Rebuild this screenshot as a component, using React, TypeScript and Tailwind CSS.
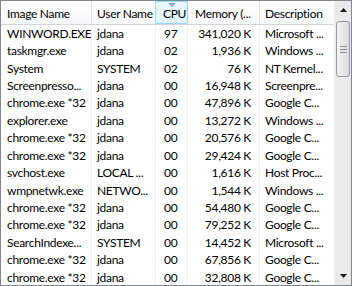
import React from "react";

type Row = [string, string, string, string, string];

const rows: Row[] = [
  ["WINWORD.EXE", "jdana", "97", "341,020 K", "Microsoft ..."],
  ["taskmgr.exe", "jdana", "02", "1,936 K", "Windows ..."],
  ["System", "SYSTEM", "02", "76 K", "NT Kernel..."],
  ["Screenpresso...", "jdana", "00", "16,948 K", "Screenpre..."],
  ["chrome.exe *32", "jdana", "00", "47,896 K", "Google C..."],
  ["explorer.exe", "jdana", "00", "13,272 K", "Windows ..."],
  ["chrome.exe *32", "jdana", "00", "20,576 K", "Google C..."],
  ["chrome.exe *32", "jdana", "00", "29,424 K", "Google C..."],
  ["svchost.exe", "LOCAL ...", "00", "1,616 K", "Host Proc..."],
  ["wmpnetwk.exe", "NETWO...", "00", "1,544 K", "Windows ..."],
  ["chrome.exe *32", "jdana", "00", "54,480 K", "Google C..."],
  ["chrome.exe *32", "jdana", "00", "79,252 K", "Google C..."],
  ["SearchIndexe...", "SYSTEM", "00", "14,452 K", "Microsoft ..."],
  ["chrome.exe *32", "jdana", "00", "67,856 K", "Google C..."],
  ["chrome.exe *32", "jdana", "00", "32,808 K", "Google C..."],
];

const cols = "grid grid-cols-[91px_64px_32px_72px_75px]";

function Header() {
  const cell =
    "h-full flex items-center pt-[2px] border-r border-[#e3e5e8] whitespace-nowrap overflow-hidden";
  return (
    <div className={`${cols} h-[24px] bg-gradient-to-b from-white to-[#f7f8fa] border-b border-[#d5d5d5]`}>
      <div className={`${cell} pl-[6px]`}>Image Name</div>
      <div className={`${cell} pl-[5px]`}>User Name</div>
      <div className="relative h-full flex items-center pt-[2px] pl-[7px] bg-gradient-to-b from-[#ebf8fe] to-[#e0f3fd] border border-[#96d9f9] -ml-px whitespace-nowrap overflow-hidden">
        <svg className="absolute top-[1px] left-[12px]" width="8" height="5" viewBox="0 0 8 5">
          <path d="M0 0 H8 L4 4 Z" fill="#8fa7c9" />
        </svg>
        CPU
      </div>
      <div className={`${cell} pl-[7px]`}>Memory (...</div>
      <div className={`${cell} pl-[5px] border-r-0`}>Description</div>
    </div>
  );
}

function Scrollbar() {
  return (
    <div className="w-[17px] h-full flex flex-col bg-[#eaeaea] border-l border-[#f2f2f2]">
      <div className="h-[18px] flex items-center justify-center shrink-0">
        <svg width="7" height="4" viewBox="0 0 7 4">
          <path d="M3.5 0 L7 4 H0 Z" fill="#1a1a1a" />
        </svg>
      </div>
      <div className="mt-[2px] mx-[1px] h-[56px] shrink-0 rounded-[3px] border border-[#979aa0] bg-gradient-to-r from-[#f4f4f4] to-[#dcdcdc] flex flex-col items-center justify-center gap-[2px]">
        <div className="w-[7px] h-px bg-[#8b8e93]" />
        <div className="w-[7px] h-px bg-[#8b8e93]" />
        <div className="w-[7px] h-px bg-[#8b8e93]" />
      </div>
      <div className="flex-1" />
      <div className="h-[18px] flex items-center justify-center shrink-0">
        <svg width="7" height="4" viewBox="0 0 7 4">
          <path d="M0 0 H7 L3.5 4 Z" fill="#1a1a1a" />
        </svg>
      </div>
    </div>
  );
}

export default function App() {
  const cell = "h-full flex items-center border-r border-[#f0f0f0] whitespace-nowrap overflow-hidden";
  return (
    <div
      className="w-[352px] h-[286px] bg-white border border-[#828790] flex overflow-hidden text-[12px] tracking-[-0.3px] text-black"
      style={{ fontFamily: 'Lato, "Liberation Sans", sans-serif' }}
    >
      <div className="w-[334px] h-full flex flex-col overflow-hidden">
        <Header />
        <div className="flex-1 overflow-hidden">
          {rows.map((r, i) => (
            <div key={i} className={`${cols} h-[17.43px]`}>
              <div className={`${cell} pl-[6px]`}>{r[0]}</div>
              <div className={`${cell} pl-[5px]`}>{r[1]}</div>
              <div className={`${cell} pl-[8px]`}>{r[2]}</div>
              <div className={`${cell} justify-end pr-[8px]`}>{r[3]}</div>
              <div className={`${cell} pl-[5px] border-r-0`}>{r[4]}</div>
            </div>
          ))}
        </div>
      </div>
      <Scrollbar />
    </div>
  );
}
